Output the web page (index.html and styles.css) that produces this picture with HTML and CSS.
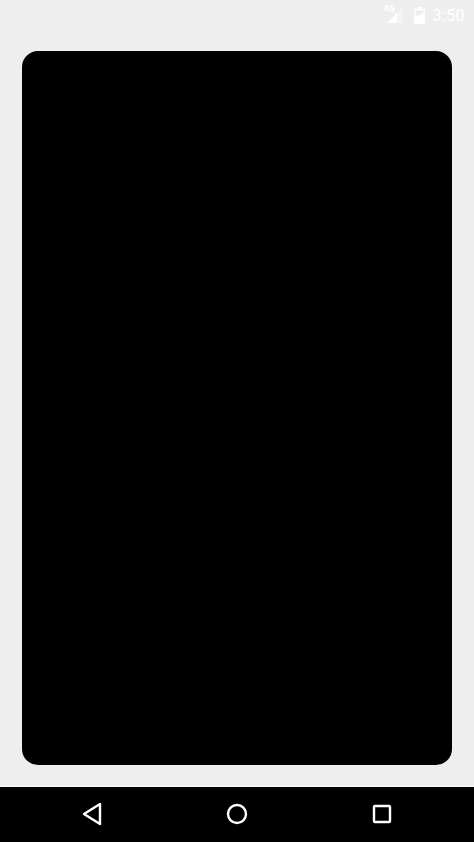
FILE: index.html
```html
<html>
  <head>
    <title>Screen</title>
    <link rel="stylesheet" href="styles.css">
  </head>
  <body>
    <div class="screen">
      <div class="status-bar">
        <div class="signal">
          <span class="network">4G</span>
          <svg width="16" height="16" viewBox="0 0 16 16">
            <path d="M16 0V16H0Z" fill="#fff" fill-opacity="0.4"/>
            <path d="M10 6V16H0Z" fill="#fff"/>
          </svg>
        </div>
        <svg class="battery" width="11" height="17" viewBox="0 0 11 17">
          <path d="M3.5 0H7.5V2H11V17H0V2H3.5ZM1.5 3.5V15.5H9.5V3.5Z" fill="#fff"/>
          <path d="M1 10L10 6V17H1Z" fill="#fff"/>
        </svg>
        <span class="time">3:50</span>
      </div>

      <div class="content">
        <div class="card"></div>
      </div>

      <div class="nav-bar">
        <svg width="20" height="24" viewBox="0 0 20 24">
          <path d="M18 2V22L2 12Z" fill="none" stroke="#fff" stroke-width="2.4" stroke-linejoin="round"/>
        </svg>
        <svg width="22" height="22" viewBox="0 0 22 22">
          <circle cx="11" cy="11" r="9" fill="none" stroke="#fff" stroke-width="2.4"/>
        </svg>
        <svg width="20" height="20" viewBox="0 0 20 20">
          <rect x="2" y="2" width="16" height="16" rx="1" fill="none" stroke="#fff" stroke-width="2.4"/>
        </svg>
      </div>
    </div>
  </body>
</html>
```

FILE: styles.css
```css
body {
  margin: 0;
  background-color: #eeeeee;
  font-family: Roboto, sans-serif;
}

.screen {
  display: flex;
  flex-direction: column;
  width: 474px;
  height: 842px;
  overflow: hidden;
}

/* Top status icons */
.status-bar {
  display: flex;
  align-items: center;
  justify-content: flex-end;
  height: 30px;
  padding-right: 9px;
  color: #ffffff;
}

.signal {
  position: relative;
  display: flex;
  margin-right: 11px;
}

.network {
  position: absolute;
  top: -3px;
  left: -3px;
  font-size: 9px;
  font-weight: bold;
}

.battery {
  margin-right: 8px;
}

.time {
  font-size: 16px;
  letter-spacing: 0.4px;
}

/* Main card */
.content {
  flex: 1;
  display: flex;
  padding: 21px 22px;
}

.card {
  flex: 1;
  background-color: #000000;
  border-radius: 16px;
}

/* Bottom navigation */
.nav-bar {
  display: flex;
  align-items: center;
  justify-content: space-between;
  box-sizing: border-box;
  height: 56px;
  padding: 0 82px 1px;
  background-color: #000000;
  border-top: 1px solid #fafafa;
}
```
